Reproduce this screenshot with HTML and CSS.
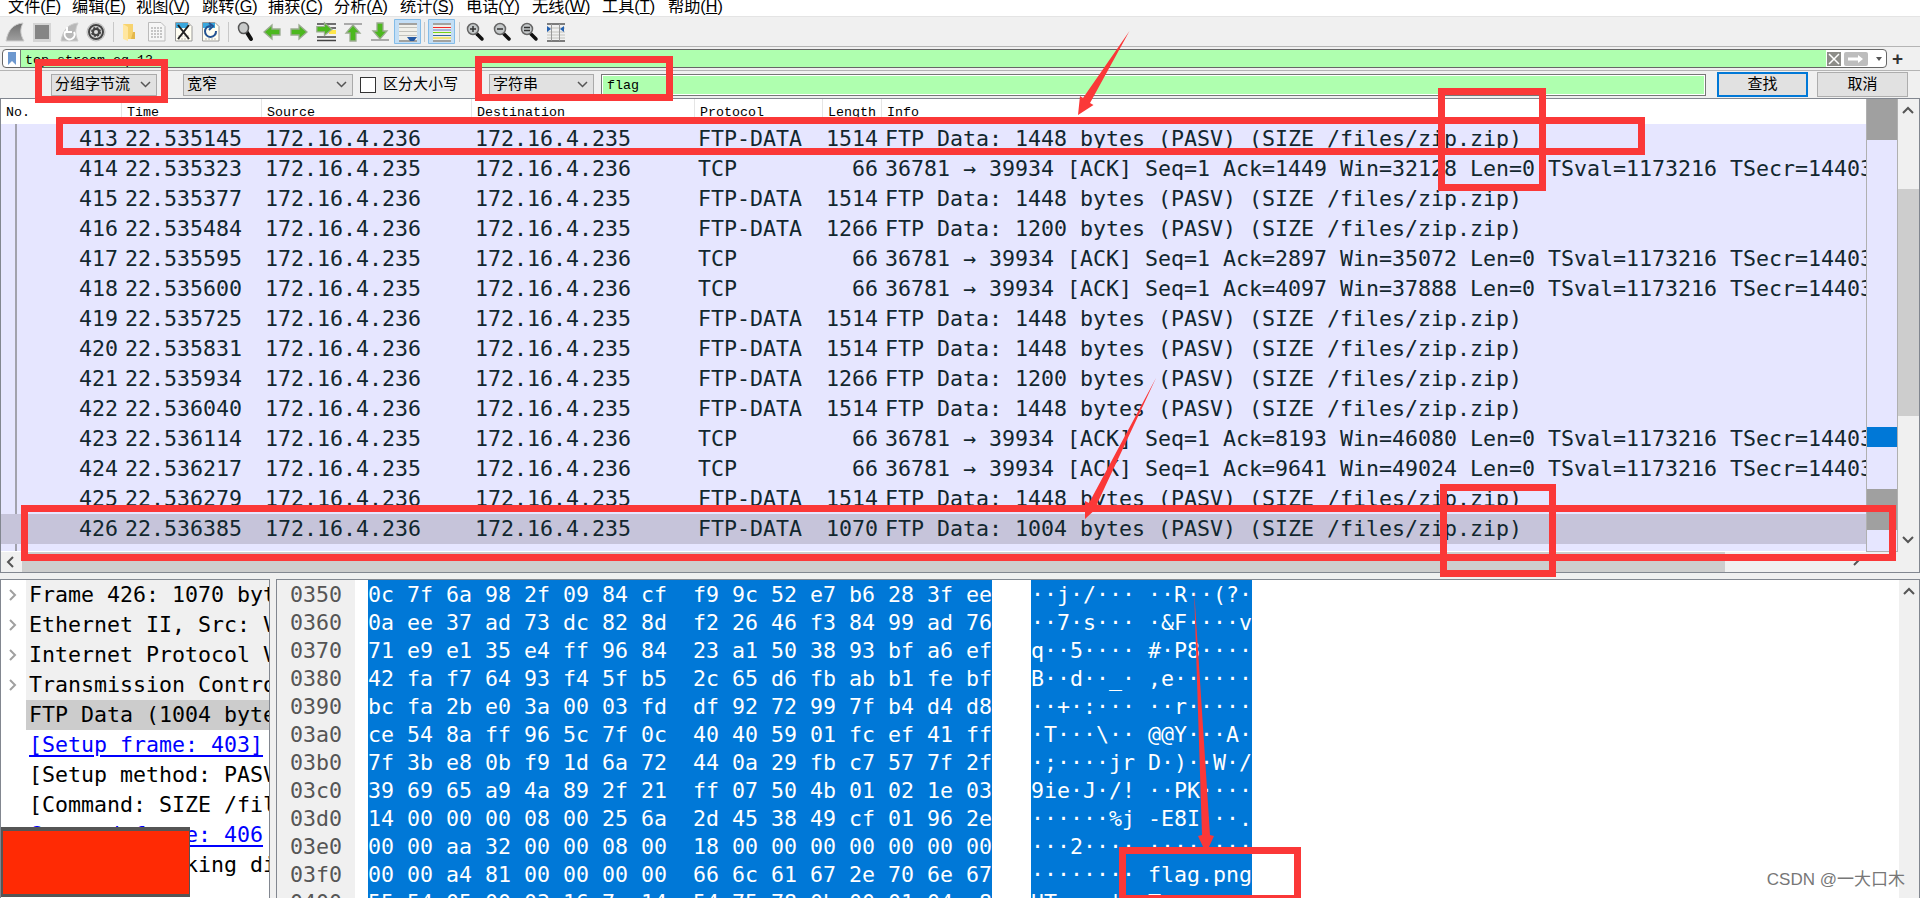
FILE: index.html
```html
<!DOCTYPE html>
<html lang="zh">
<head><meta charset="utf-8"><title>Wireshark</title><link rel="stylesheet" href="styles.css"></head>
<body>
<div class="app">
<nav class="menu"><span>文件(<u>F</u>)</span><span>编辑(<u>E</u>)</span><span>视图(<u>V</u>)</span><span>跳转(<u>G</u>)</span><span>捕获(<u>C</u>)</span><span>分析(<u>A</u>)</span><span>统计(<u>S</u>)</span><span>电话(<u>Y</u>)</span><span>无线(<u>W</u>)</span><span>工具(<u>T</u>)</span><span>帮助(<u>H</u>)</span></nav>
<div class="toolbar">
<svg class="tools" width="600" height="28" viewBox="0 18 600 28">
<defs>
<linearGradient id="g" x2="0" y2="1"><stop offset="0" stop-color="#707070"/><stop offset="1" stop-color="#a0a0a0"/></linearGradient>
<g id="doc"><path d="M.5.5H13l4 4v14.500H.5z" fill="#fffef2" stroke="#999"/></g>
<path id="arr" d="M1 8 9 1V5H17V11H9V15Z" fill="#4cb81e" stroke="#9aaa90" stroke-width="1.300"/>
<g id="mag"><path d="m11 12 5 5" stroke="#111" stroke-width="3.500" stroke-linecap="round"/><circle cx="7" cy="7" r="5.500" fill="#c5c9ca" stroke="#666" stroke-width="1.500"/></g>
</defs>
<path d="M6 41C8 30 13 24 23 23C20 29 20 34 24 41Z" fill="url(#g)" stroke="#ccc"/>
<path d="M33 23H51V42H33Z" fill="#d5d5d5"/><path d="M35 25H49V39H35Z" fill="#858585"/>
<path d="M61 41C63 30 68 24 78 23C75 29 75 34 78 41Z" fill="#b8b8b8" stroke="#ccc"/><path d="M66 31a5 5 0 1 0 8 1M67 27v5h5" fill="none" stroke="#fff" stroke-width="2"/>
<circle cx="96" cy="32" r="9" fill="#ddd" stroke="#bbb"/><circle cx="96" cy="32" r="7" fill="none" stroke="#444" stroke-width="2"/><circle cx="96" cy="32" r="4" fill="#444" stroke="#444" stroke-width="2" stroke-dasharray="2 1.140"/><circle cx="96" cy="32" r="2" fill="#ddd"/>
<path d="M113.500 22V42M228.500 22V42M424.500 22V42M459.500 22V42" stroke="#c8c8c8"/>
<path d="M123 24H133V39H123Z" fill="#f7d36f"/><path d="m123 24 5 3V41l-5-2z" fill="#ffe6a0"/><path d="M133 32h2v7h-4z" fill="#e3b74b"/>
<g opacity=".6"><path d="M148.500 22.500H161l4 4v14.500h-16.500z" fill="#fafafa" stroke="#999"/><path d="M151 28H163M151 31H163M151 34H163M151 37H163" stroke="#aaa" stroke-width="2" stroke-dasharray="2 1"/></g>
<use href="#doc" x="175" y="22"/><path d="M176 23h12v5h-12z" fill="#39a7dd"/><path d="M178 36h12M178 39h12" stroke="#bbb" stroke-dasharray="2 1"/><path d="m178 25 11 14m0-14-11 14" stroke="#222" stroke-width="2"/>
<use href="#doc" x="202" y="22"/><path d="M203 23h12v5h-12z" fill="#39a7dd"/><path d="M205 39h12" stroke="#bbb" stroke-dasharray="2 1"/><path d="M216 31a5.500 5.500 0 1 1-5-5M209 23l4 3-4 4" fill="none" stroke="#245392" stroke-width="2"/>
<path d="m246 31 5 8" stroke="#111" stroke-width="4" stroke-linecap="round"/><ellipse cx="243.500" cy="28" rx="5" ry="5.500" fill="#c8caca" stroke="#555" stroke-width="1.500"/>
<use href="#arr" x="263" y="24"/><use href="#arr" transform="translate(308 24) scale(-1 1)"/>
<path d="M317 24H336M317 28H336M317 37H336M317 40.500H336" stroke="#444" stroke-width="1.500"/><path d="M329 30h7v4h-7z" fill="#ffe64a"/><use href="#arr" transform="translate(333 22) scale(-.95 .9)"/>
<path d="M344 24H362M371 40H389" stroke="#aaa" stroke-width="2"/><use href="#arr" transform="translate(361 24) rotate(90)"/><use href="#arr" transform="translate(372 40) rotate(-90)"/>
<path d="M394.500 19.500h26v24h-26zM428.500 19.500h26v24h-26z" fill="#c3def5" stroke="#83bce8"/>
<path d="M399 23h18v19h-18zM433 23h18v19h-18z" fill="#f0f0ea"/><path d="M399 24h18M399 41h18M433 24h18M433 41h18" stroke="#555"/><path d="M399 27.500h18M399 31.500h18M399 35.500h18" stroke="#c2c2bc"/><path d="m407 37h10l-3 4h-4z" fill="#245aa4"/>
<path d="M433 27.500h18" stroke="#ef2929"/><path d="M433 30h18" stroke="#6077cc"/><path d="M433 32.500h18" stroke="#73d216"/><path d="M433 35.500h18" stroke="#3465a4"/><path d="M433 38h18" stroke="#edd400"/>
<use href="#mag" x="466" y="22"/><path d="M470 29h6m-3-3v6" stroke="#333" stroke-width="1.500"/>
<use href="#mag" x="493" y="22"/><path d="M497 29h6" stroke="#333" stroke-width="1.500"/>
<use href="#mag" x="520" y="22"/><path d="M524 27.500h6M524 30.500h6" stroke="#333" stroke-width="1.500"/>
<path d="M547 24h18M547 41h18" stroke="#555" stroke-width="1.500"/><path d="M547 28h18M547 32h18M547 35h18M547 38h18" stroke="#c2c2bc"/><path d="M551.500 24v17M559.500 24v17" stroke="#999"/><path d="M547 26l4 3-4 3zM564 26l-4 3 4 3z" fill="#2461b0"/>
</svg>
</div>
<div class="filterbar"><div class="filter"><svg class="mark" width="18" height="18"><path d="M5 2h8v13l-4-4-4 4z" fill="#6d98cf"/></svg><div class="expr">tcp.stream eq 13</div><svg class="fbtn" width="60" height="18"><path d="M1 2h14v14H1z" fill="#8c8c88"/><path d="m3 4 10 10m0-10L3 14" stroke="#fff" stroke-width="1.500"/><rect x="18" y="2" width="24" height="14" rx="2" fill="#bdbdbd"/><path d="M22 7.500h10V5l5 4-5 4v-2.500H22z" fill="#fff"/><path d="M50 7h6l-3 4z" fill="#555"/></svg></div><b class="plus">+</b></div>
<div class="find">
<div class="combo c1"><span>分组字节流</span><svg width="11" height="7"><path d="m1 1 4.500 4.500L10 1"/></svg></div>
<div class="combo c2"><span>宽窄</span><svg width="11" height="7"><path d="m1 1 4.500 4.500L10 1"/></svg></div>
<i class="check"></i><span class="case">区分大小写</span>
<div class="combo c3"><span>字符串</span><svg width="11" height="7"><path d="m1 1 4.500 4.500L10 1"/></svg></div>
<div class="needle">flag</div><div class="btn main">查找</div><div class="btn">取消</div>
</div>
<div class="packets">
<div class="list">
<div class="row head"><span>No.</span><span>Time</span><span>Source</span><span>Destination</span><span>Protocol</span><span>Length</span><span>Info</span></div>
<div class="rows" id="rows"></div>
<div class="hbar"><svg width="20" height="20"><path d="m12 5-5 5 5 5"/></svg><i></i><svg class="r" width="20" height="20"><path d="m8 3 5 5-5 5"/></svg></div>
</div>
<div class="side"><div class="map"><i class="m1"></i><i class="m2"></i><i class="m3"></i></div></div>
<div class="vbar"><svg width="20" height="20"><path d="m5 13 5-5 5 5"/></svg><i></i><svg width="20" height="20"><path d="m5 9 5 5 5-5"/></svg></div>
</div>
<div class="lower">
<div class="tree">
<div class="node"><svg width="26" height="30"><path d="m9 10 5 5-5 5"/></svg><span>Frame 426: 1070 bytes on wire</span></div>
<div class="node"><svg width="26" height="30"><path d="m9 10 5 5-5 5"/></svg><span>Ethernet II, Src: VMware</span></div>
<div class="node"><svg width="26" height="30"><path d="m9 10 5 5-5 5"/></svg><span>Internet Protocol Version 4</span></div>
<div class="node"><svg width="26" height="30"><path d="m9 10 5 5-5 5"/></svg><span>Transmission Control Protocol</span></div>
<div class="node sel"><span>FTP Data (1004 bytes data)</span></div>
<div class="node plain link"><span><u>[Setup frame: 403]</u></span></div>
<div class="node plain"><span>[Setup method: PASV]</span></div>
<div class="node plain"><span>[Command: SIZE /files/zip.zip]</span></div>
<div class="node plain link"><span><u>Command frame: 406</u></span></div>
<div class="node plain"><span>[Current working directory: ]</span></div>
<div class="thumb"></div>
</div>
<div class="bytes"><div class="offs" id="offs"></div><div class="hex" id="hex"></div><div class="asc" id="asc"></div></div>
<div class="vbar low"><svg width="20" height="20"><path d="m5 13 5-5 5 5"/></svg></div>
</div>
</div>
<svg class="notes" width="1920" height="898">
<g fill="none" stroke="#fb3838" stroke-width="7"><path d="M38.500 62.500h126v37h-126zM478.500 59.500h191v38h-191zM59.500 120.500h1582v31H59.500zM1441.500 91.500h101v96h-101zM24.500 508.500h1868v49H24.500zM1443.500 487.500h109v86h-109zM1122.500 850.500h175v48h-175z"/></g>
<g fill="#fb3838"><path d="M1129.500 31 1090 103 1093.500 105 1078 115 1080 96 1083 98Z"/><path d="M1156 378 1097 504 1099 506 1085 519 1085 501 1089 503Z"/><path d="M1194 588 1210 835 1214 836 1208 849h-4L1198 836 1202 835Z"/></g>
</svg>
<div class="sign">CSDN @一大口木</div>
<script src="app.js"></script>
</body>
</html>
```
FILE: styles.css
```css
*{box-sizing:border-box}
body{margin:0;width:1920px;height:898px;overflow:hidden;background:#f0f0f0;font-family:"Liberation Mono","Noto Sans CJK SC",monospace;color:#000}
.app{display:flex;flex-direction:column;height:898px}
.menu{height:17px;flex:none;background:#fff;display:flex;font:16.200px/20px "Liberation Sans","Noto Sans CJK SC",sans-serif;padding-left:8px;overflow:hidden;align-items:flex-end;border-bottom:1px solid #e4e4e4}
.menu span{width:66px;height:20px;flex:none;white-space:nowrap}
.menu span:nth-child(-n+2){width:64px}
.menu span:nth-child(9){width:70px}
.toolbar{height:30px;flex:none;border-bottom:1px solid #b4b4b4;padding-top:1px}
.tools{display:block}
.filterbar{height:24px;flex:none;display:flex;padding:2px 0 0 2px;border-bottom:1px solid #b4b4b4}
.filter{display:flex;width:1885px;height:19px;border:1px solid #666;border-radius:4px;background:#fff;overflow:hidden}
.mark{border-right:1px solid #777}
.expr{flex:1;background:#afffaf;font-size:13.330px;line-height:21px;padding-left:4px}
.plus{font:bold 19px/20px "Liberation Sans",sans-serif;margin-left:5px;color:#333}
.find{height:27px;flex:none;display:flex;align-items:center;font:15px/19px "Liberation Mono","Noto Sans CJK SC",monospace;padding-left:51px;white-space:nowrap}
.combo{height:22px;border:1px solid #aaa;background:#e1e1e1;display:flex;align-items:center;justify-content:space-between;padding:0 5px 0 3px}
.combo span,.case{padding-top:2px}
.combo svg path,.vbar path,.hbar path{fill:none;stroke:#555;stroke-width:1.500}
.vbar path,.hbar path{stroke-width:2}
.c1{width:106px;margin-right:26px}.c2{width:170px;margin-right:7px}.c3{width:105px;margin-right:7px}
.check{width:16px;height:16px;background:#fff;border:1px solid #333;margin-right:7px}
.case{width:106px}
.needle{width:1105px;height:22px;border:1px solid #777;box-shadow:inset 0 0 0 1px #fff;background:#afffaf;font-size:13.330px;padding-left:5px;line-height:22px;margin-right:11px}
.btn{width:91px;height:25px;border:1px solid #adadad;background:#e1e1e1;text-align:center;line-height:25px;margin-right:9px}
.btn.main{border:2px solid #0078d7;line-height:23px}
.packets{height:475px;flex:none;display:flex;border:1px solid #828790;background:#fff}
.list{width:1865px;flex:none}
.row{display:grid;grid-template-columns:121px 140px 210px 223px 128px 59px 1fr;height:30px;line-height:30px;font-size:21.600px;font-family:"DejaVu Sans Mono",monospace;color:#12272e;white-space:pre;overflow:hidden}
.row span{padding-left:3px}
.row:not(.head) span:nth-child(1),.row:not(.head) span:nth-child(6){display:flex;justify-content:flex-end;padding:0 4px 0 0}
.row:last-child{line-height:35px}
.row.head{height:25px;line-height:27px;font-size:13.330px;font-family:"Liberation Mono",monospace;background:#fff;color:#000}
.row.head span{border-right:1px solid #e5e5e5;padding-left:5px}
.row.head span:last-child{border:0}
.rows{height:427px;overflow:hidden;background:linear-gradient(90deg,transparent 14px,#a2a2ad 14px,#a2a2ad 16px,transparent 16px) #e6e6ff}
.row.sel{background:#c6c4da}
.hbar{height:21px;background:#f0f0f0;border-top:1px solid #fff;display:flex}
.hbar i{width:1703px;background:#cdcdcd;margin-left:1px}.hbar .r{margin-left:auto}
.side{width:32px;flex:none;background:#f0f0f0}
.map{height:453px;border:solid #b0b0b0;border-width:0 1px 1px;background:#e6e6ff}
.map i{display:block}.m1{height:41px;background:#a0a0a0}.m2{height:20px;margin-top:287px;background:#0078d7}.m3{height:41px;margin-top:42px;background:#a0a0a0}
.vbar{flex:1;background:#f0f0f0;display:flex;flex-direction:column}
.vbar svg{margin-top:1px}
.vbar i{height:227px;margin-top:69px;background:#cdcdcd}.vbar i+svg{margin-top:112px}
.lower{flex:1;display:flex;margin-top:6px;font:21.600px/30px "DejaVu Sans Mono",monospace;min-height:0;overflow:hidden}
.tree{position:relative;width:270px;flex:none;border:1px solid #828790;border-bottom:0;background:#fff;overflow:hidden}
.node{height:30px;display:flex;overflow:hidden;white-space:nowrap}
.node svg{flex:none;width:25px}.node path{fill:none;stroke:#a0a0a0;stroke-width:2}
.node span{flex:1;background:#f0f0f0;padding-left:3px}
.node.sel,.node.plain{padding-left:25px}.node.sel span{background:#ccc}.node.plain span{background:#fff}
.link{color:#00f}.link u{text-decoration-thickness:2px;text-underline-offset:3px}
.thumb{position:absolute;left:-1px;top:247px;width:190px;height:70px;background:#ff2a04;border:solid #555;border-width:4px 1px 3px 3px}
.bytes{flex:1;display:flex;margin-left:6px;border:solid #828790;border-width:1px 0 0 1px;background:#fff;line-height:28px;white-space:pre}
.offs{width:78px;background:#f0f0f0;color:#555;padding:1px 0 0 13px}
.hex{margin-left:13px;width:624px;background:#0078d7;color:#fff;padding-top:1px}
.asc{margin-left:39px;width:221px;background:#0078d7;color:#fff;padding-top:1px}
.low{flex:none;width:21px;border:solid #828790;border-width:1px 1px 0 0}
.notes{position:absolute;left:0;top:0}
.sign{position:absolute;right:15px;top:869px;font:17px/22px "Liberation Sans","Noto Sans CJK SC",sans-serif;color:#777}
```
FILE: app.js
```js
const A = '172.16.4.236', B = '172.16.4.235';
const data = n => `FTP Data: ${n} bytes (PASV) (SIZE /files/zip.zip)`;
const ack = (a, w) => `36781 → 39934 [ACK] Seq=1 Ack=${a} Win=${w} Len=0 TSval=1173216 TSecr=14403`;
const packets = [
  ['535145', 1514, 1448], ['535323', 1449, 32128, 1], ['535377', 1514, 1448], ['535484', 1266, 1200],
  ['535595', 2897, 35072, 1], ['535600', 4097, 37888, 1], ['535725', 1514, 1448], ['535831', 1514, 1448],
  ['535934', 1266, 1200], ['536040', 1514, 1448], ['536114', 8193, 46080, 1], ['536217', 9641, 49024, 1],
  ['536279', 1514, 1448], ['536385', 1070, 1004], ['536402', 11089, 51968, 1]
];
document.getElementById('rows').innerHTML = packets.map((p, i) => {
  const t = p[3];
  const cells = [413 + i, '22.' + p[0], t ? B : A, t ? A : B, t ? 'TCP' : 'FTP-DATA', t ? 66 : p[1], t ? ack(p[1], p[2]) : data(p[2])];
  return `<div class="row${i === 13 ? ' sel' : ''}">${cells.map(c => `<span>${c}</span>`).join('')}</div>`;
}).join('');
const dump = [
  ['0c 7f 6a 98 2f 09 84 cf  f9 9c 52 e7 b6 28 3f ee', '··j·/··· ··R··(?·'],
  ['0a ee 37 ad 73 dc 82 8d  f2 26 46 f3 84 99 ad 76', '··7·s··· ·&F····v'],
  ['71 e9 e1 35 e4 ff 96 84  23 a1 50 38 93 bf a6 ef', 'q··5···· #·P8····'],
  ['42 fa f7 64 93 f4 5f b5  2c 65 d6 fb ab b1 fe bf', 'B··d··_· ,e······'],
  ['bc fa 2b e0 3a 00 03 fd  df 92 72 99 7f b4 d4 d8', '··+·:··· ··r·····'],
  ['ce 54 8a ff 96 5c 7f 0c  40 40 59 01 fc ef 41 ff', '·T···\\·· @@Y···A·'],
  ['7f 3b e8 0b f9 1d 6a 72  44 0a 29 fb c7 57 7f 2f', '·;····jr D·)··W·/'],
  ['39 69 65 a9 4a 89 2f 21  ff 07 50 4b 01 02 1e 03', '9ie·J·/! ··PK····'],
  ['14 00 00 00 08 00 25 6a  2d 45 38 49 cf 01 96 2e', '······%j -E8I···.'],
  ['00 00 aa 32 00 00 08 00  18 00 00 00 00 00 00 00', '···2···· ········'],
  ['00 00 a4 81 00 00 00 00  66 6c 61 67 2e 70 6e 67', '········ flag.png'],
  ['55 54 05 00 03 16 7c 14  54 75 78 0b 00 01 04 e8', 'UT····|· Tux·····']
];
document.getElementById('offs').textContent = dump.map((_, i) => (0x350 + i * 16).toString(16).padStart(4, '0')).join('\n');
document.getElementById('hex').textContent = dump.map(d => d[0]).join('\n');
document.getElementById('asc').textContent = dump.map(d => d[1]).join('\n');
```
